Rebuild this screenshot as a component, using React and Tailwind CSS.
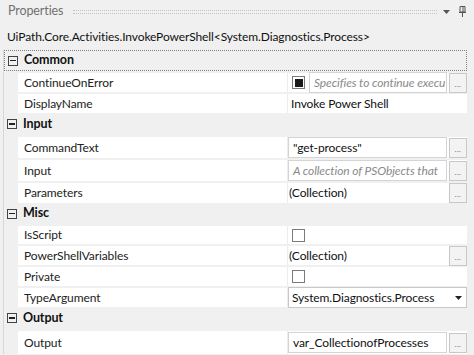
import { useState } from 'react';

const rows = [
  { cat: 'Common', h: 21 },
  { name: 'ContinueOnError', h: 21, kind: 'checkText', placeholder: 'Specifies to continue execu' },
  { name: 'DisplayName', h: 21, kind: 'text', value: 'Invoke Power Shell' },
  { cat: 'Input', h: 22 },
  { name: 'CommandText', h: 23, kind: 'box', value: '"get-process"' },
  { name: 'Input', h: 23, kind: 'box', placeholder: 'A collection of PSObjects that' },
  { name: 'Parameters', h: 22, kind: 'collection', value: '(Collection)' },
  { cat: 'Misc', h: 21 },
  { name: 'IsScript', h: 20, kind: 'check' },
  { name: 'PowerShellVariables', h: 21, kind: 'collection', value: '(Collection)' },
  { name: 'Private', h: 21, kind: 'check' },
  { name: 'TypeArgument', h: 21, kind: 'combo', value: 'System.Diagnostics.Process' },
  { cat: 'Output', h: 22 },
  { name: 'Output', h: 25, kind: 'box', value: 'var_CollectionofProcesses' },
];

function DotsButton() {
  return (
    <div className="w-[18px] h-[20px] shrink-0 border border-[#c8c8c8] bg-[#f3f3f3] flex items-end justify-center pb-[4px]">
      <span className="text-[7px] leading-none text-[#555] tracking-[0.5px]">...</span>
    </div>
  );
}

function CheckBox({ filled }) {
  return (
    <div className="w-[13px] h-[13px] shrink-0 border border-[#7a7a7a] bg-white flex items-center justify-center">
      {filled && <div className="w-[8px] h-[8px] bg-[#1a1a1a]" />}
    </div>
  );
}

function TextBox({ value, placeholder }) {
  return (
    <div className="flex-1 min-w-0 h-[21px] border border-[#d4d4d4] bg-white flex items-center px-[4px] overflow-hidden whitespace-nowrap">
      {value ? (
        <span className="text-[#111]">{value}</span>
      ) : (
        <span className="italic text-[#8a8a8a]">{placeholder}</span>
      )}
    </div>
  );
}

function Value({ row }) {
  switch (row.kind) {
    case 'checkText':
      return (
        <div className="flex items-center gap-[3px] pl-[4px] h-full">
          <CheckBox filled />
          <div className="flex-1 min-w-0 flex items-center gap-[2px] pl-[1px]">
            <TextBox placeholder={row.placeholder} />
            <DotsButton />
          </div>
        </div>
      );
    case 'text':
      return <div className="flex items-center h-full pl-[3px] text-[#111]">{row.value}</div>;
    case 'box':
      return (
        <div className="flex items-center gap-[2px] h-full">
          <TextBox value={row.value} placeholder={row.placeholder} />
          <DotsButton />
        </div>
      );
    case 'collection':
      return (
        <div className="flex items-center justify-between h-full pl-[1px]">
          <span className="text-[#111]">{row.value}</span>
          <DotsButton />
        </div>
      );
    case 'check':
      return (
        <div className="flex items-center h-full pl-[4px]">
          <CheckBox />
        </div>
      );
    case 'combo':
      return (
        <div className="flex items-center h-full">
          <div className="flex-1 h-[21px] border border-[#c8c8c8] bg-white flex items-center justify-between pl-[3px] pr-[4px]">
            <span className="text-[#111]">{row.value}</span>
            <svg width="7" height="4" viewBox="0 0 7 4">
              <path d="M0 0 H7 L3.5 4 Z" fill="#222" />
            </svg>
          </div>
        </div>
      );
    default:
      return null;
  }
}

export default function App() {
  const [open] = useState(true);

  return (
    <div
      className="w-[474px] h-[355px] overflow-hidden bg-[#f0f0f0] text-[12px] tracking-[-0.1px] leading-none"
      style={{ fontFamily: 'Lato, "Noto Sans", sans-serif' }}
    >
      {/* title bar */}
      <div className="h-[23px] flex items-center pl-[8px] pr-[8px]">
        <span className="text-[#707070] text-[12.5px]">Properties</span>
        <div className="flex-1 ml-[10px] mr-[6px] h-[4px] border-y border-dotted border-[#c4c4c4]" />
        <svg width="7" height="4" viewBox="0 0 7 4" className="mr-[9px]">
          <path d="M0 0 H7 L3.5 4 Z" fill="#555" />
        </svg>
        <svg width="7" height="11" viewBox="0 0 7 11">
          <path d="M1 0.5 H6 V6 H1 Z M0 6.5 H7 M3.5 7 V11" stroke="#555" fill="none" strokeWidth="1" />
          <path d="M4 1 V6" stroke="#555" />
        </svg>
      </div>

      {/* type name */}
      <div className="h-[27px] flex items-center pl-[7px] text-[12px] text-[#111]">
        UiPath.Core.Activities.InvokePowerShell&lt;System.Diagnostics.Process&gt;
      </div>

      {/* grid */}
      <div className="ml-[3px] mr-[7px] border-l border-[#d8d8d8]">
        {open &&
          rows.map((row, i) =>
            row.cat ? (
              <div
                key={i}
                style={{ height: row.h }}
                className={`flex items-center bg-[#f0f0f0] ${i === 0 ? 'border border-dotted border-[#808080]' : ''}`}
              >
                <div className="w-[10px] h-[10px] ml-[3px] border border-[#444] flex items-center justify-center">
                  <div className="w-[6px] h-[1.5px] bg-[#222]" />
                </div>
                <span className="ml-[6px] font-bold text-[12.5px] text-[#111]">{row.cat}</span>
              </div>
            ) : (
              <div key={i} style={{ height: row.h }} className="flex pl-[14px] border-t-2 border-[#f0f0f0]">
                <div className="w-[269px] shrink-0 bg-white flex items-center pl-[6px] text-[#222]">
                  {row.name}
                </div>
                <div className="flex-1 min-w-0 bg-white border-l border-[#ececec]">
                  <Value row={row} />
                </div>
              </div>
            )
          )}
      </div>
    </div>
  );
}
